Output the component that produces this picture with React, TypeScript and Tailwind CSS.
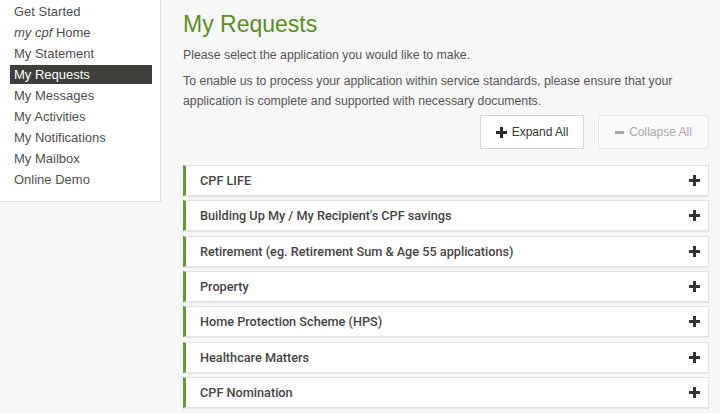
import React from "react";

const navItems = [
  "Get Started",
  "__home__",
  "My Statement",
  "My Requests",
  "My Messages",
  "My Activities",
  "My Notifications",
  "My Mailbox",
  "Online Demo",
];

const rows = [
  "CPF LIFE",
  "Building Up My / My Recipient's CPF savings",
  "Retirement (eg. Retirement Sum & Age 55 applications)",
  "Property",
  "Home Protection Scheme (HPS)",
  "Healthcare Matters",
  "CPF Nomination",
];

function Plus({ className = "" }: { className?: string }) {
  return (
    <svg width="11" height="11" viewBox="0 0 11 11" className={className}>
      <rect x="4" y="0" width="3" height="11" fill="currentColor" />
      <rect x="0" y="4" width="11" height="3" fill="currentColor" />
    </svg>
  );
}

export default function App() {
  return (
    <div
      className="w-[720px] h-[413px] overflow-hidden bg-[#f7f7f7] flex items-start"
      style={{ fontFamily: '"Liberation Sans", Arial, sans-serif' }}
    >
      <aside className="w-[161px] shrink-0 bg-white border-r border-b border-[#dcdcdc] pt-px pl-[10px] pr-[8px] pb-[11px]">
        <ul>
          {navItems.map((item) => {
            const active = item === "My Requests";
            return (
              <li key={item} className="py-px">
                <div
                  className={`h-[19px] leading-[19px] pl-[4px] text-[13px] ${
                    active ? "bg-[#3e3f3a] text-white" : "text-[#4f4f4f]"
                  }`}
                >
                  {item === "__home__" ? (
                    <>
                      <i>my cpf</i> Home
                    </>
                  ) : (
                    item
                  )}
                </div>
              </li>
            );
          })}
        </ul>
      </aside>

      <main className="ml-[22px] w-[526px] shrink-0">
        <h1 className="mt-[11px] text-[23px] leading-[26px] text-[#5a8f25]">My Requests</h1>
        <p className="mt-[8px] text-[12.3px] leading-[20px] text-[#555]">
          Please select the application you would like to make.
        </p>
        <p className="mt-[6px] text-[12.3px] leading-[20px] text-[#555]">
          To enable us to process your application within service standards, please ensure that your
          <br />
          application is complete and supported with necessary documents.
        </p>
        <div className="mt-[4px] flex justify-end gap-[14px]">
          <button className="w-[104px] h-[34px] bg-white border border-[#d6d6d6] flex items-center justify-center gap-[5px] text-[12px] text-[#333]">
            <Plus className="text-[#2a2a2a]" />
            Expand All
          </button>
          <button className="w-[111px] h-[34px] bg-[#fafafa] border border-[#e6e6e6] flex items-center justify-center gap-[5px] text-[12px] text-[#a8a8a8]">
            <svg width="9" height="3" viewBox="0 0 9 3">
              <rect x="0" y="0" width="9" height="3" fill="currentColor" />
            </svg>
            Collapse All
          </button>
        </div>
        <div className="mt-[16px] flex flex-col gap-[4.33px]">
          {rows.map((r) => (
            <div
              key={r}
              className="h-[31px] shrink-0 bg-white border border-[#e2e2e2] border-l-[3px] border-l-[#659a33] shadow-[0_1px_1px_rgba(0,0,0,0.06)] flex items-center justify-between pl-[14px] pr-[8px]"
            >
              <span
                className="text-[12.7px] font-medium text-[#454545]"
                style={{ fontFamily: "Roboto, 'Liberation Sans', sans-serif" }}
              >
                {r}
              </span>
              <Plus className="text-[#333]" />
            </div>
          ))}
        </div>
      </main>
    </div>
  );
}
